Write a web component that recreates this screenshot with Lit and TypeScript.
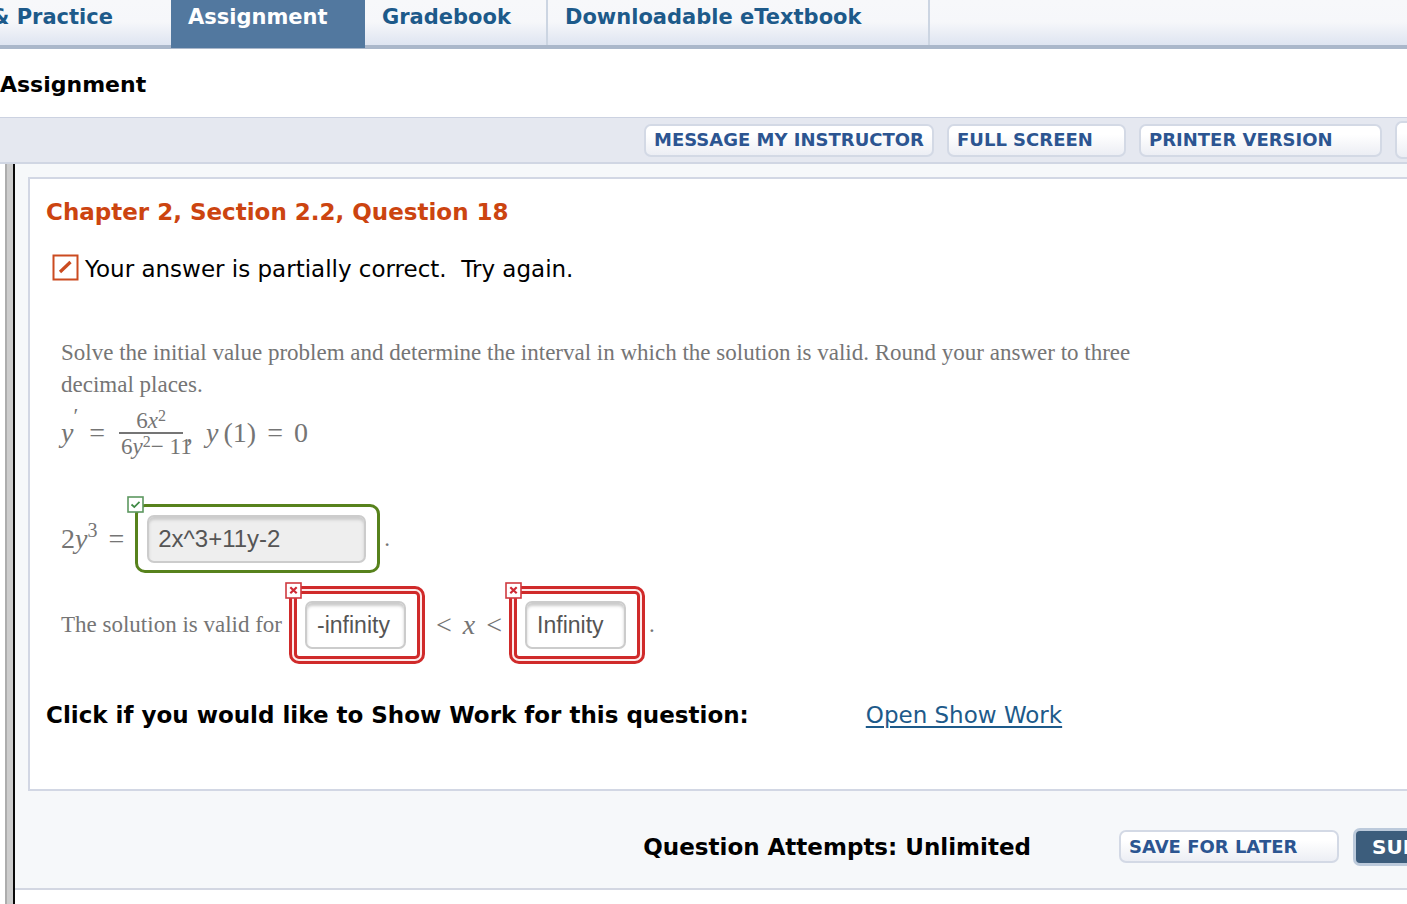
import { LitElement, html, css } from "lit";
import { customElement, property } from "lit/decorators.js";

@customElement("answer-field")
class AnswerField extends LitElement {
  @property() value = "";
  @property() label = "";
  @property() status: "right" | "wrong" = "wrong";

  static styles = css`
    :host {
      display: block;
      flex: none;
      white-space: normal;
    }
    .frame {
      position: relative;
      box-sizing: border-box;
      padding: 7px 11px 7px 8px;
      border: 8px double #d02a2a;
      border-radius: 10px;
      background: linear-gradient(#fff, #fff) padding-box, #fdeaea border-box;
    }
    .frame.right {
      padding: 8px 11px 7px 9px;
      border: 3px solid #57821c;
      background: #fff;
    }
    .badge {
      position: absolute;
      left: -12px;
      top: -12px;
      width: 17px;
      height: 17px;
      display: block;
    }
    .right .badge {
      left: -11px;
      top: -11px;
    }
    input {
      display: block;
      box-sizing: border-box;
      width: 101px;
      height: 48px;
      padding: 0 10px;
      border: 2px solid #ccc;
      border-radius: 7px;
      background: #fff;
      box-shadow: inset 0 3px 3px #ccc;
      color: #555;
      font: 23px/28px "Liberation Sans", sans-serif;
      outline: none;
    }
    .right input {
      width: 219px;
      padding: 0 9px;
      background: #eee;
      font-size: 24px;
    }
  `;

  render() {
    const right = this.status === "right";
    const color = right ? "#5d9860" : "#cf3a40";
    return html`
      <div class="frame ${this.status}">
        <input type="text" aria-label=${this.label} .value=${this.value} ?readonly=${right} />
        <svg class="badge" viewBox="0 0 17 17" aria-hidden="true">
          <rect x="1" y="1" width="15" height="15" fill="#fff" stroke=${color} stroke-width="1.6" />
          <path
            d=${right ? "M4.5 8.5 L7.3 11 L12.5 5.8" : "M5.3 5.3 L11.7 11.3 M11.7 5.3 L5.3 11.3"}
            fill="none"
            stroke=${right ? "#3f8a45" : "#cf2a35"}
            stroke-width=${right ? 1.7 : 2.2}
          />
        </svg>
      </div>
    `;
  }
}

@customElement("app-root")
class AppRoot extends LitElement {
  static styles = css`
    :host {
      display: flex;
      flex-direction: column;
      min-height: 100vh;
      overflow: hidden;
      background: #fff;
      color: #000;
      font: 23px/28px "DejaVu Sans", Verdana, sans-serif;
    }
    .tabs {
      display: flex;
      border-bottom: 4px solid #aab7ca;
      background: linear-gradient(#f7f8fa 0, #f6f7fa 22px, #dfe5f1 44px);
    }
    .tab {
      box-sizing: border-box;
      flex: none;
      height: 45px;
      padding: 3px 18px 0 17px;
      border-right: 2px solid #ccd5e2;
      color: #1d5a8a;
      font-size: 21px;
      font-weight: bold;
      text-decoration: none;
      white-space: nowrap;
    }
    .practice {
      display: flex;
      justify-content: flex-end;
      width: 171px;
      padding-right: 58px;
      border-right: 0;
    }
    .active {
      width: 194px;
      height: 48px;
      margin-bottom: -3px;
      border-right: 0;
      background: #52789f;
      color: #fff;
    }
    .grades {
      width: 183px;
    }
    .book {
      width: 382px;
    }
    h1 {
      margin: 0;
      padding: 22px 0 18px;
      font-size: 22px;
      line-height: 28px;
    }
    .toolbar {
      display: flex;
      justify-content: flex-end;
      align-items: center;
      gap: 13px;
      box-sizing: border-box;
      min-height: 47px;
      border-top: 1px solid #ccd2e1;
      border-bottom: 2px solid #d0d6e3;
      background: #e5e8f0;
    }
    .btn {
      box-sizing: border-box;
      flex: none;
      height: 33px;
      padding: 0 8px;
      border: 2px solid #d3d9e5;
      border-radius: 7px;
      background: linear-gradient(#fff 30%, #eceef4);
      color: #2c5591;
      font: bold 18px/24px "DejaVu Sans", Verdana, sans-serif;
      text-align: left;
      white-space: nowrap;
    }
    .message {
      width: 290px;
    }
    .full {
      width: 179px;
    }
    .print {
      width: 243px;
    }
    .more {
      width: 12px;
      height: 38px;
      padding: 0;
      border-right: 0;
      border-radius: 7px 0 0 7px;
    }
    .body {
      display: flex;
      flex: 1;
    }
    .splitter {
      box-sizing: border-box;
      flex: none;
      width: 10px;
      margin-left: 5px;
      border-left: 2px solid #adadad;
      border-right: 2px solid #0a0a0a;
      background: #cdcdcd;
    }
    .main {
      flex: 1;
      min-width: 0;
    }
    .sheet {
      padding: 13px 0 0 13px;
      border-bottom: 2px solid #d3d7e2;
      background: #f6f8fa;
    }
    .panel {
      box-sizing: border-box;
      padding: 19px 16px 60px;
      border: 2px solid #d2d7e4;
      border-right: 0;
      background: #fff;
    }
    h2 {
      margin: 0;
      color: #cc4410;
      font-size: 23px;
      line-height: 28px;
    }
    .feedback {
      display: flex;
      align-items: flex-start;
      gap: 6px;
      margin: 28px 0 0 6px;
      line-height: 30px;
      white-space: pre-wrap;
    }
    .feedback svg {
      flex: none;
      width: 27px;
      height: 27px;
    }
    .question {
      margin: 53px 0 0 15px;
      color: #757575;
      font: 23px/32px "Liberation Serif", "Times New Roman", serif;
    }
    .question p {
      max-width: 1080px;
      margin: 0;
    }
    .math {
      display: flex;
      align-items: center;
      font-size: 28px;
      line-height: 30px;
      white-space: nowrap;
    }
    .math sup {
      font-size: 20px;
      line-height: 0;
      vertical-align: 11px;
    }
    .equation {
      height: 63px;
    }
    .sign {
      margin: 0 11px;
    }
    .fraction {
      display: flex;
      flex-direction: column;
      align-items: center;
      width: 64px;
      margin: 4px 3px 0;
      font-size: 23px;
      line-height: 22px;
    }
    .fraction sup {
      font-size: 16px;
      vertical-align: 7px;
    }
    .denominator {
      align-self: stretch;
      padding-left: 2px;
      border-top: 2px solid #757575;
      line-height: 26px;
    }
    .prime {
      align-self: flex-start;
      font-size: 22px;
    }
    .rest {
      margin-left: 13px;
    }
    .argument {
      margin-left: 5px;
    }
    answer-field {
      margin-right: 4px;
    }
    .first {
      margin-top: 40px;
    }
    .second {
      margin-top: 13px;
    }
    .second answer-field {
      margin-left: 7px;
    }
    .lead {
      font-size: 23px;
    }
    .relation {
      margin-left: 7px;
    }
    .work {
      display: flex;
      flex-wrap: wrap;
      gap: 8px 117px;
      margin-top: 37px;
    }
    .work a {
      color: #1d5a8a;
      text-decoration-thickness: 2px;
      text-underline-offset: 3px;
    }
    .footer {
      display: flex;
      justify-content: flex-end;
      align-items: center;
      min-height: 97px;
      padding-top: 14px;
      box-sizing: border-box;
    }
    .attempts {
      margin-right: 88px;
      font-weight: bold;
    }
    .save {
      width: 220px;
      margin-right: 14px;
    }
    .submit {
      width: 54px;
      height: 38px;
      padding: 0 0 0 16px;
      overflow: hidden;
      border: 3px solid #bccadb;
      border-right: 0;
      border-radius: 7px 0 0 7px;
      background: #3c5d7c;
      color: #fff;
      font-size: 20px;
    }
  `;

  render() {
    return html`
      <nav class="tabs">
        <a class="tab practice" href="#practice">&amp; Practice</a>
        <a class="tab active" href="#assignment" aria-current="page">Assignment</a>
        <a class="tab grades" href="#gradebook">Gradebook</a>
        <a class="tab book" href="#etextbook">Downloadable eTextbook</a>
      </nav>
      <h1>Assignment</h1>
      <div class="toolbar">
        <button class="btn message">MESSAGE MY INSTRUCTOR</button>
        <button class="btn full">FULL SCREEN</button>
        <button class="btn print">PRINTER VERSION</button>
        <button class="btn more" aria-label="More"></button>
      </div>
      <div class="body">
        <div class="splitter"></div>
        <main class="main">
          <div class="sheet">
            <section class="panel">
              <h2>Chapter 2, Section 2.2, Question 18</h2>
              <div class="feedback"><svg viewBox="0 0 27 27" aria-hidden="true"><rect x="1.5" y="1.5" width="24" height="24" fill="#fff" stroke="#cb4b20" stroke-width="2" /><path d="M8 18 L18.5 8" stroke="#cb4b20" stroke-width="3.2" /></svg><span>Your answer is partially correct.  Try again.</span></div>
              <div class="question">
                <p>Solve the initial value problem and determine the interval in which the solution is valid. Round your answer to three decimal places.</p>
                <div class="math equation">
                  <i>y</i><span class="prime">′</span><span class="sign">=</span>
                  <span class="fraction"><span>6<i>x</i><sup>2</sup></span><span class="denominator">6<i>y</i><sup>2</sup>− 11</span></span>
                  <span>,</span>
                  <i class="rest">y</i><span class="argument">(1)</span><span class="sign">=</span><span>0</span>
                </div>
                <div class="math first">
                  <span>2<i>y</i><sup>3</sup></span><span class="sign">=</span>
                  <answer-field status="right" label="2y cubed equals" value="2x^3+11y-2"></answer-field>
                  <span class="lead">.</span>
                </div>
                <div class="math second">
                  <span class="lead">The solution is valid for</span>
                  <answer-field label="Lower bound" value="-infinity"></answer-field>
                  <span class="relation">&lt;</span><i class="sign">x</i><span>&lt;</span>
                  <answer-field label="Upper bound" value="Infinity"></answer-field>
                  <span class="lead">.</span>
                </div>
              </div>
              <div class="work"><strong>Click if you would like to Show Work for this question:</strong><a href="#show-work">Open Show Work</a></div>
            </section>
            <div class="footer">
              <span class="attempts">Question Attempts: Unlimited</span>
              <button class="btn save">SAVE FOR LATER</button>
              <button class="btn submit">SUB</button>
            </div>
          </div>
        </main>
      </div>
    `;
  }
}
